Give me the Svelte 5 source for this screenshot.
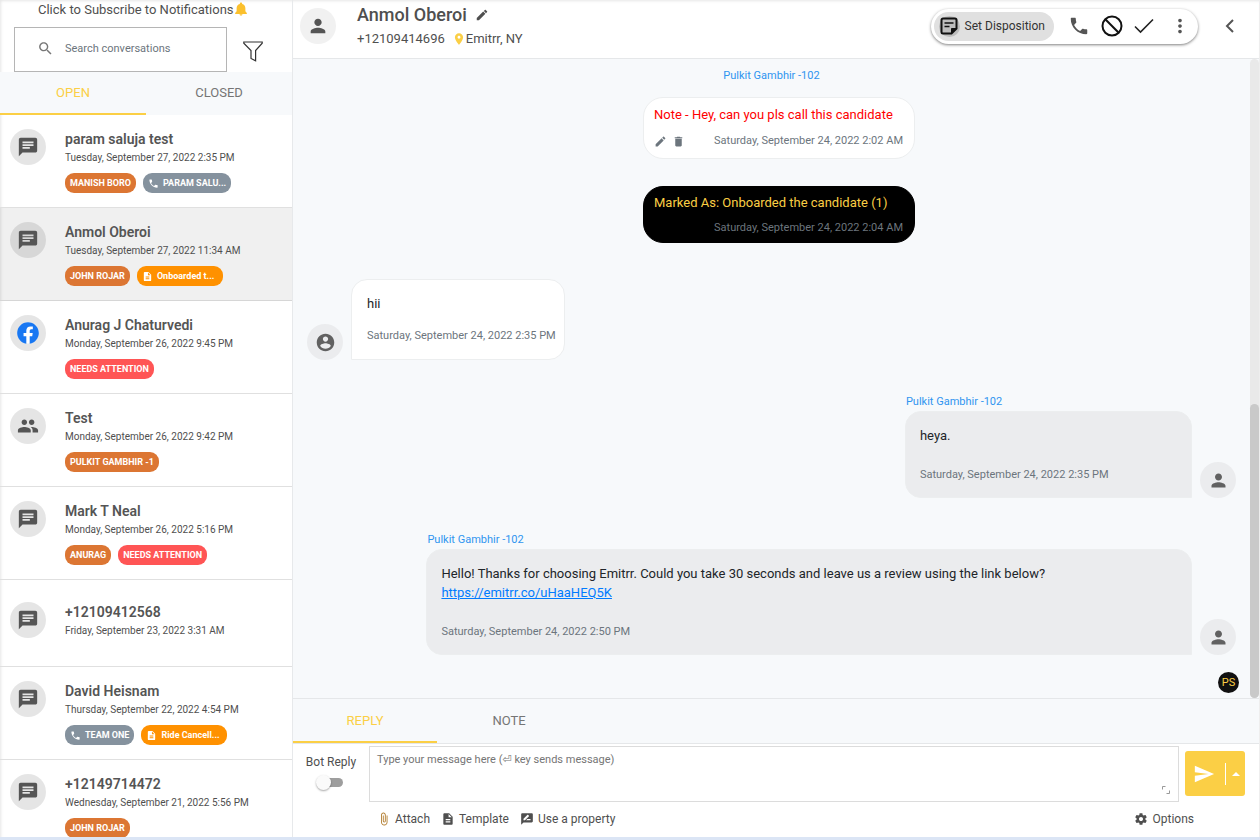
<script lang="ts">
  type Tag = { kind: "owner" | "line" | "status" | "alert"; text: string; icon?: string };
  type Conversation = { icon: string; name: string; date: string; tags: Tag[] };

  const icons: Record<string, string> = {
    chat: "M20 2H4c-1.1 0-1.99.9-1.99 2L2 22l4-4h14c1.1 0 2-.9 2-2V4c0-1.1-.9-2-2-2zM6 9h12v2H6V9zm8 5H6v-2h8v2zm4-6H6V6h12v2z",
    person: "M12 12c2.21 0 4-1.79 4-4s-1.79-4-4-4-4 1.79-4 4 1.79 4 4 4zm0 2c-2.67 0-8 1.34-8 4v2h16v-2c0-2.66-5.33-4-8-4z",
    group: "M16 11c1.66 0 2.99-1.34 2.99-3S17.66 5 16 5c-1.66 0-3 1.34-3 3s1.34 3 3 3zm-8 0c1.66 0 2.99-1.34 2.99-3S9.66 5 8 5C6.34 5 5 6.34 5 8s1.34 3 3 3zm0 2c-2.33 0-7 1.17-7 3.5V19h14v-2.5c0-2.33-4.67-3.5-7-3.5zm8 0c-.29 0-.62.02-.97.05 1.16.84 1.97 1.97 1.97 3.45V19h6v-2.5c0-2.33-4.67-3.5-7-3.5z",
    account: "M12 2C6.48 2 2 6.48 2 12s4.48 10 10 10 10-4.48 10-10S17.52 2 12 2zm0 3c1.66 0 3 1.34 3 3s-1.34 3-3 3-3-1.34-3-3 1.34-3 3-3zm0 14.2c-2.5 0-4.71-1.28-6-3.22.03-1.99 4-3.08 6-3.08 1.99 0 5.97 1.09 6 3.08-1.29 1.94-3.5 3.22-6 3.22z",
    edit: "M3 17.25V21h3.75L17.81 9.94l-3.75-3.75L3 17.25zM20.71 7.04c.39-.39.39-1.02 0-1.41l-2.34-2.34c-.39-.39-1.02-.39-1.41 0l-1.83 1.83 3.75 3.75 1.83-1.83z",
    trash: "M6 19c0 1.1.9 2 2 2h8c1.1 0 2-.9 2-2V7H6v12zM19 4h-3.5l-1-1h-5l-1 1H5v2h14V4z",
    place: "M12 2C8.13 2 5 5.13 5 9c0 5.25 7 13 7 13s7-7.75 7-13c0-3.87-3.13-7-7-7zm0 9.5c-1.38 0-2.5-1.12-2.5-2.5s1.12-2.5 2.5-2.5 2.5 1.12 2.5 2.5-1.12 2.5-2.5 2.5z",
    phone: "M6.62 10.79c1.44 2.83 3.76 5.14 6.59 6.59l2.2-2.2c.27-.27.67-.36 1.02-.24 1.12.37 2.33.57 3.57.57.55 0 1 .45 1 1V20c0 .55-.45 1-1 1-9.39 0-17-7.61-17-17 0-.55.45-1 1-1h3.5c.55 0 1 .45 1 1 0 1.25.2 2.45.57 3.57.11.35.03.74-.25 1.02l-2.2 2.2z",
    search: "M15.5 14h-.79l-.28-.27C15.41 12.59 16 11.11 16 9.5 16 5.91 13.09 3 9.5 3S3 5.91 3 9.5 5.91 16 9.5 16c1.61 0 3.09-.59 4.23-1.57l.27.28v.79l5 4.99L20.49 19l-4.99-5zm-6 0C7.01 14 5 11.99 5 9.5S7.01 5 9.5 5 14 7.01 14 9.5 11.99 14 9.5 14z",
    doc: "M14 2H6c-1.1 0-1.99.9-1.99 2L4 20c0 1.1.89 2 1.99 2H18c1.1 0 2-.9 2-2V8l-6-6zm2 16H8v-2h8v2zm0-4H8v-2h8v2zm-3-5V3.5L18.5 9H13z",
    more: "M12 8c1.1 0 2-.9 2-2s-.9-2-2-2-2 .9-2 2 .9 2 2 2zm0 2c-1.1 0-2 .9-2 2s.9 2 2 2 2-.9 2-2-.9-2-2-2zm0 6c-1.1 0-2 .9-2 2s.9 2 2 2 2-.9 2-2-.9-2-2-2z",
    bell: "M12 23c1.500 0 2.500-.9 2.500-2.200h-5C9.500 22.100 10.500 23 12 23zM19.500 16v-5.500c0-3.500-2-6.300-5.500-7V3c0-1.100-.9-2-2-2s-2 .9-2 2v.5c-3.500.7-5.500 3.500-5.500 7V16L2 19v1.500h20V19z",
    send: "M2.010 21L23 12 2.010 3 2 10l15 2-15 2z",
    clip: "M16.500 6v11.500c0 2.210-1.790 4-4 4s-4-1.790-4-4V5c0-1.380 1.120-2.500 2.500-2.500s2.500 1.120 2.500 2.500v10.500c0 .55-.45 1-1 1s-1-.45-1-1V6H10v9.500c0 1.380 1.120 2.500 2.500 2.500s2.500-1.120 2.500-2.500V5c0-2.210-1.790-4-4-4S7 2.790 7 5v12.500c0 3.040 2.460 5.500 5.500 5.500s5.500-2.460 5.500-5.500V6h-1.500z",
    review: "M20 2H4c-1.1 0-1.99.9-1.99 2L2 22l4-4h14c1.1 0 2-.9 2-2V4c0-1.1-.9-2-2-2zM6 14v-2.47l6.88-6.88c.2-.2.51-.2.71 0l1.77 1.77c.2.2.2.51 0 .71L8.47 14H6zm12 0h-7.5l2-2H18v2z",
    gear: "M19.43 12.98c.04-.32.07-.64.07-.98s-.03-.66-.07-.98l2.11-1.65c.19-.15.24-.42.12-.64l-2-3.46c-.12-.22-.39-.3-.61-.22l-2.49 1c-.52-.4-1.08-.73-1.69-.98l-.38-2.65C14.46 2.18 14.25 2 14 2h-4c-.25 0-.46.18-.49.42l-.38 2.65c-.61.25-1.17.59-1.69.98l-2.49-1c-.23-.09-.49 0-.61.22l-2 3.46c-.13.22-.07.49.12.64l2.11 1.65c-.04.32-.07.65-.07.98s.03.66.07.98l-2.11 1.65c-.19.15-.24.42-.12.64l2 3.46c.12.22.39.3.61.22l2.49-1c.52.4 1.08.73 1.69.98l.38 2.65c.03.24.24.42.49.42h4c.25 0 .46-.18.49-.42l.38-2.65c.61-.25 1.17-.59 1.69-.98l2.49 1c.23.09.49 0 .61-.22l2-3.46c.12-.22.07-.49-.12-.64l-2.11-1.65zM12 15.5c-1.93 0-3.5-1.57-3.5-3.5s1.57-3.5 3.5-3.5 3.5 1.57 3.5 3.5-1.57 3.5-3.5 3.5z",
    facebook: "M22 12c0-5.52-4.48-10-10-10S2 6.48 2 12c0 4.99 3.66 9.13 8.44 9.88v-6.99H7.9V12h2.54V9.8c0-2.510 1.490-3.890 3.780-3.890 1.090 0 2.240.19 2.240.19v2.460h-1.260c-1.240 0-1.630.77-1.630 1.560V12h2.780l-.45 2.890h-2.330v6.990C18.340 21.130 22 16.990 22 12z"
  };

  const conversations: Conversation[] = [
    { icon: "chat", name: "param saluja test", date: "Tuesday, September 27, 2022 2:35 PM", tags: [{ kind: "owner", text: "MANISH BORO" }, { kind: "line", text: "PARAM SALU...", icon: "phone" }] },
    { icon: "chat", name: "Anmol Oberoi", date: "Tuesday, September 27, 2022 11:34 AM", tags: [{ kind: "owner", text: "JOHN ROJAR" }, { kind: "status", text: "Onboarded t...", icon: "doc" }] },
    { icon: "facebook", name: "Anurag J Chaturvedi", date: "Monday, September 26, 2022 9:45 PM", tags: [{ kind: "alert", text: "NEEDS ATTENTION" }] },
    { icon: "group", name: "Test", date: "Monday, September 26, 2022 9:42 PM", tags: [{ kind: "owner", text: "PULKIT GAMBHIR -1" }] },
    { icon: "chat", name: "Mark T Neal", date: "Monday, September 26, 2022 5:16 PM", tags: [{ kind: "owner", text: "ANURAG" }, { kind: "alert", text: "NEEDS ATTENTION" }] },
    { icon: "chat", name: "+12109412568", date: "Friday, September 23, 2022 3:31 AM", tags: [] },
    { icon: "chat", name: "David Heisnam", date: "Thursday, September 22, 2022 4:54 PM", tags: [{ kind: "line", text: "TEAM ONE", icon: "phone" }, { kind: "status", text: "Ride Cancell...", icon: "doc" }] },
    { icon: "chat", name: "+12149714472", date: "Wednesday, September 21, 2022 5:56 PM", tags: [{ kind: "owner", text: "JOHN ROJAR" }] }
  ];

  let listTab = $state("OPEN");
  let replyTab = $state("REPLY");
  let current = $state(1);
  let query = $state("");
  let draft = $state("");
  let botReply = $state(false);
</script>

{#snippet icon(name: string, size: number)}
  <svg class="icon" width={size} height={size} viewBox="0 0 24 24" aria-hidden="true"><path d={icons[name]} /></svg>
{/snippet}

<div class="app">
  <div class="panes">
    <aside class="sidebar">
      <button class="subscribe">Click to Subscribe to Notifications<span class="bell">{@render icon("bell", 14)}</span></button>

      <div class="search-row">
        <label class="search">
          {@render icon("search", 17)}
          <input type="text" placeholder="Search conversations" aria-label="Search conversations" bind:value={query} />
        </label>
        <button class="filter" aria-label="Filter">
          <svg width="20" height="21" viewBox="0 0 20 21" fill="none" stroke="#333" stroke-width="1.2" aria-hidden="true">
            <path d="M.8 1h18.400v1.200L12.600 9.500v10.300L8 17.500v-8L.8 2.200z" />
          </svg>
        </button>
      </div>

      <div class="tabs list-tabs">
        {#each ["OPEN", "CLOSED"] as t}
          <button class:active={listTab === t} onclick={() => (listTab = t)}>{t}</button>
        {/each}
      </div>

      <div class="list">
        {#each conversations as c, idx}
          <button class="conv" class:selected={current === idx} class:plain={!c.tags.length} onclick={() => (current = idx)}>
            <span class="avatar {c.icon}">{@render icon(c.icon, c.icon === "facebook" ? 26 : 22)}</span>
            <span class="info">
              <span class="name">{c.name}</span>
              <span class="date">{c.date}</span>
              {#if c.tags.length}
                <span class="tags">
                  {#each c.tags as tag}
                    <span class="tag {tag.kind}">
                      {#if tag.icon}{@render icon(tag.icon, 11)}{/if}
                      <span>{tag.text}</span>
                    </span>
                  {/each}
                </span>
              {/if}
            </span>
          </button>
        {/each}
      </div>
    </aside>

    <main class="main">
      <header class="head">
        <span class="avatar light">{@render icon("person", 22)}</span>
        <div class="contact">
          <h1>Anmol Oberoi <button aria-label="Edit name">{@render icon("edit", 14)}</button></h1>
          <p><span>+12109414696</span><span class="pin">{@render icon("place", 14)}</span><span>Emitrr, NY</span></p>
        </div>
        <div class="toolbar">
          <button class="disposition">
            <span class="disp-icon">
              <svg width="18" height="18" viewBox="0 0 18 18" fill="none" stroke="#111" stroke-width="2" aria-hidden="true">
                <path d="M3 1.500h12a1.500 1.500 0 0 1 1.500 1.500v8.500l-5 5H3A1.500 1.500 0 0 1 1.500 15V3A1.500 1.500 0 0 1 3 1.500z" />
                <path d="M4.500 6h9M4.500 9.500h5" stroke-width="1.500" />
                <path d="M11.500 16.500v-5h5z" fill="#111" stroke-width="1" />
              </svg>
            </span>
            Set Disposition
          </button>
          <button class="tool" aria-label="Call">{@render icon("phone", 22)}</button>
          <button class="tool" aria-label="Block">
            <svg width="22" height="22" viewBox="0 0 22 22" fill="none" stroke="#111" stroke-width="2" aria-hidden="true">
              <circle cx="11" cy="11" r="9.500" /><path d="M4.300 4.300l13.400 13.400" />
            </svg>
          </button>
          <button class="tool check" aria-label="Close conversation">
            <svg width="20" height="16" viewBox="0 0 20 16" fill="none" stroke="#222" stroke-width="1.600" aria-hidden="true"><path d="M1 8.500l5.500 5.500L19 1.500" /></svg>
          </button>
          <button class="tool" aria-label="More">{@render icon("more", 22)}</button>
        </div>
        <button class="collapse" aria-label="Collapse">
          <svg width="10" height="14" viewBox="0 0 10 14" fill="none" stroke="#555" stroke-width="2" aria-hidden="true"><path d="M8 1L2 7l6 6" /></svg>
        </button>
      </header>

      <section class="thread">
        <div class="messages">
          <div class="system">
            <div class="author">Pulkit Gambhir -102</div>
            <article class="note">
              <p>Note - Hey, can you pls call this candidate</p>
              <footer>
                <button aria-label="Edit note">{@render icon("edit", 13)}</button>
                <button aria-label="Delete note">{@render icon("trash", 13)}</button>
                <time>Saturday, September 24, 2022 2:02 AM</time>
              </footer>
            </article>
            <article class="note marked">
              <p>Marked As: Onboarded the candidate (1)</p>
              <footer><time>Saturday, September 24, 2022 2:04 AM</time></footer>
            </article>
          </div>

          <div class="msg incoming">
            <span class="avatar soft">{@render icon("account", 21)}</span>
            <article class="bubble">
              <p>hii</p>
              <time>Saturday, September 24, 2022 2:35 PM</time>
            </article>
          </div>

          <div class="msg outgoing short">
            <div class="body">
              <div class="author">Pulkit Gambhir -102</div>
              <article class="bubble">
                <p>heya.</p>
                <time>Saturday, September 24, 2022 2:35 PM</time>
              </article>
            </div>
            <span class="avatar soft">{@render icon("person", 21)}</span>
          </div>

          <div class="msg outgoing">
            <div class="body">
              <div class="author">Pulkit Gambhir -102</div>
              <article class="bubble">
                <p>Hello! Thanks for choosing Emitrr. Could you take 30 seconds and leave us a review using the link below?<br /><a href="https://emitrr.co/uHaaHEQ5K">https://emitrr.co/uHaaHEQ5K</a></p>
                <time>Saturday, September 24, 2022 2:50 PM</time>
              </article>
            </div>
            <span class="avatar soft">{@render icon("person", 21)}</span>
          </div>

          <span class="viewer">PS</span>
        </div>
        <div class="scrollbar"><div class="thumb"></div></div>
      </section>

      <div class="tabs reply-tabs">
        {#each ["REPLY", "NOTE"] as t}
          <button class:active={replyTab === t} onclick={() => (replyTab = t)}>{t}</button>
        {/each}
      </div>

      <section class="composer">
        <label class="bot">
          Bot Reply
          <input type="checkbox" bind:checked={botReply} />
        </label>
        <div class="entry">
          <div class="field">
            <textarea placeholder="Type your message here (⏎ key sends message)" aria-label="Message" bind:value={draft}></textarea>
            <svg class="grow" width="8" height="8" viewBox="0 0 8 8" fill="none" stroke="#999" aria-hidden="true"><path d="M.5 3.500v-3h3M7.500 4.500v3h-3" /></svg>
          </div>
          <div class="actions">
            <button class="attach">{@render icon("clip", 14)}Attach</button>
            <button>{@render icon("doc", 14)}Template</button>
            <button>{@render icon("review", 14)}Use a property</button>
            <button class="options">{@render icon("gear", 14)}Options</button>
          </div>
        </div>
        <div class="send">
          <button class="go" aria-label="Send">{@render icon("send", 22)}</button>
          <button class="menu" aria-label="Send options"><span class="caret"></span></button>
        </div>
      </section>
    </main>
  </div>
  <div class="strip"></div>
</div>

<style>
  :global(body) { background: #fff; }
  .app {
    height: 100vh;
    display: flex;
    flex-direction: column;
    overflow: hidden;
    font-family: Roboto, "Liberation Sans", sans-serif;
    color: #4f4f4f;
  }
  .app *, .app *::before { box-sizing: border-box; }
  button {
    font: inherit;
    color: inherit;
    background: none;
    border: 0;
    padding: 0;
    cursor: pointer;
  }
  p, h1 { margin: 0; }
  .icon { display: block; flex: none; fill: currentColor; }
  .panes { flex: 1; min-height: 0; display: flex; }
  .strip { height: 3px; background: #dbe5f5; }

  /* sidebar */
  .sidebar {
    flex: 0 0 293px;
    display: flex;
    flex-direction: column;
    border-right: 1px solid #e7e9eb;
    overflow: hidden;
    box-shadow: inset 3px 3px 3px -2px rgba(0, 0, 0, .1);
  }
  .subscribe {
    display: flex;
    align-items: center;
    padding-left: 38px;
    height: 18px;
    font-size: 13px;
  }
  .bell { color: #fbc02d; }
  .search-row { display: flex; align-items: center; padding: 9px 29px 0 14px; }
  .search {
    flex: 1;
    min-width: 0;
    display: flex;
    align-items: center;
    gap: 11px;
    height: 45px;
    padding: 0 8px 3px 22px;
    border: 1px solid #b5b5b5;
    color: #777;
  }
  .search input {
    min-width: 0;
    flex: 1;
    border: 0;
    padding: 0;
    outline: none;
    background: none;
    font: 11px Roboto, sans-serif;
    color: #333;
  }
  .search input::placeholder { color: #6c757d; }
  .filter { margin-left: 16px; display: flex; padding-top: 3px; }

  .tabs { display: flex; background: #f7f9fb; }
  .tabs button {
    border-bottom: 2px solid transparent;
    color: #757575;
    font-size: 13px;
  }
  .tabs button.active { color: #fbcf45; border-color: #fbcf45; }
  .list-tabs button { flex: 1; height: 43px; }

  .list { flex: 1; min-height: 0; overflow: hidden; }
  .conv {
    width: 100%;
    display: flex;
    align-items: flex-start;
    gap: 19px;
    padding: 14px 10px;
    border-bottom: 1px solid #e0e0e0;
    text-align: left;
  }
  .conv.plain { padding: 22px 10px 14px; }
  .conv.selected { background: rgba(0, 0, 0, .06); border-color: #d6d6d6; }
  .avatar {
    flex: none;
    width: 36px;
    height: 36px;
    border-radius: 50%;
    display: flex;
    align-items: center;
    justify-content: center;
    background: rgba(0, 0, 0, .1);
    color: #555;
  }
  .avatar.light { background: #f1f1f1; }
  .avatar.soft { background: #ebecee; color: #616161; }
  .avatar.facebook { color: #1877f2; background: radial-gradient(#fff 10px, #e5e5e5 11px); }
  .info { display: flex; flex-direction: column; min-width: 0; min-height: 50px; }
  .name { font-size: 14px; font-weight: 600; line-height: 21px; color: #555; }
  .date { font-size: 10px; line-height: 16px; }
  .tags { display: flex; gap: 7px; margin-top: 7px; }
  .tag {
    display: flex;
    align-items: center;
    gap: 4px;
    height: 20px;
    padding: 0 5px;
    border-radius: 9px;
    white-space: nowrap;
    font-size: 9px;
    font-weight: 700;
    color: #fff;
  }
  .owner { background: #dc7633; }
  .line { background: #85929e; }
  .status { background: #ff9100; min-width: 86px; }
  .alert { background: #ff5555; }

  /* conversation header */
  .main { flex: 1; min-width: 0; display: flex; flex-direction: column; border-right: 1px solid #eee; }
  .head {
    display: flex;
    align-items: center;
    height: 59px;
    padding: 0 24px 6px 7px;
    border-bottom: 1px solid #e5e7e9;
    box-shadow: inset 0 3px 3px -2px rgba(0, 0, 0, .1);
  }
  .contact { flex: 1; margin-left: 21px; padding-top: 2px; }
  .contact h1 {
    display: flex;
    align-items: center;
    gap: 8px;
    font-size: 18px;
    font-weight: 500;
    line-height: 24px;
  }
  .contact p { display: flex; align-items: center; font-size: 13px; line-height: 24px; }
  .pin { color: #fbcf45; margin-left: 7px; }
  .toolbar {
    display: flex;
    align-items: center;
    height: 35px;
    padding: 0 7px 0 3px;
    border-radius: 18px;
    box-shadow: 0 1px 3px rgba(0, 0, 0, .5);
    color: #555;
  }
  .disposition {
    display: flex;
    align-items: center;
    gap: 5px;
    height: 29px;
    padding: 0 9px 0 5px;
    margin-right: 14px;
    border-radius: 15px;
    background: #e0e0e0;
    font-size: 12px;
    color: #333;
  }
  .disp-icon {
    display: flex;
    align-items: center;
    justify-content: center;
    width: 21px;
    height: 21px;
    border-radius: 50%;
    background: #bdbdbd;
  }
  .tool { display: flex; margin-right: 11px; }
  .tool.check { margin-right: 15px; }
  .tool:last-child { margin: 0; }
  .collapse { display: flex; margin-left: 27px; }

  /* thread */
  .thread { flex: 1; min-height: 0; display: flex; background: #f7f9fb; }
  .messages { flex: 1; min-width: 0; overflow: hidden; display: flex; flex-direction: column; }
  .scrollbar { width: 9px; display: flex; align-items: flex-end; background: #e9e9e9; border-radius: 5px; }
  .thumb { width: 100%; height: 46%; background: #c9c9c9; border-radius: 5px; }
  .author { font-size: 11px; line-height: 16px; color: #2f95f0; }
  time { font-size: 11px; line-height: 16px; color: #6c757d; }
  .messages p { font-size: 13px; line-height: 19px; color: #212529; }
  .messages p a { color: #007bff; }

  .system { display: flex; flex-direction: column; align-items: center; padding-top: 9px; }
  .note {
    width: 272px;
    margin: 13px 0 0 15px;
    padding: 7px 11px 9px 10px;
    border: 1px solid #eceeef;
    border-radius: 20px;
    background: #fff;
  }
  .messages .note p { color: #f00; }
  .note footer { display: flex; align-items: center; gap: 5px; margin-top: 9px; color: #6c757d; }
  .note time { margin-left: auto; }
  .note.marked { margin-top: 27px; background: #000; border-color: #000; padding: 6px 11px 6px 10px; }
  .messages .note.marked p { color: #fbcf45; }
  .note.marked footer { margin-top: 8px; }

  .msg { display: flex; align-items: flex-end; gap: 8px; }
  .bubble { display: flex; flex-direction: column; border-radius: 16px; border: 1px solid #eceeef; }
  .incoming { padding-left: 14px; margin-top: 36px; }
  .incoming .bubble {
    background: #fff;
    border-bottom-left-radius: 0;
    padding: 14px 8px 15px 15px;
  }
  .incoming time { margin-top: 15px; }
  .outgoing { justify-content: flex-end; margin-top: 34px; }
  .outgoing .avatar { margin-right: 14px; }
  .outgoing .body { width: 80%; }
  .outgoing.short .body { width: 30%; }
  .outgoing .author { padding-left: 1px; margin-bottom: 1px; }
  .outgoing .bubble { background: #ebecee; border-bottom-right-radius: 0; padding: 14px; }
  .outgoing time { margin-top: 22px; }
  .viewer {
    align-self: flex-end;
    flex: none;
    margin: 17px 11px 0 0;
    width: 21px;
    height: 21px;
    line-height: 21px;
    border-radius: 50%;
    background: #111;
    color: #fbcf45;
    font-size: 11px;
    text-align: center;
  }

  /* composer */
  .reply-tabs { border-top: 1px solid #e5e7e9; border-bottom: 1px solid #e5e7e9; }
  .reply-tabs button { width: 144px; height: 44px; }
  .composer { display: flex; align-items: flex-start; padding: 2px 14px 1px 0; }
  .bot {
    width: 76px;
    display: flex;
    flex-direction: column;
    align-items: center;
    gap: 8px;
    padding-top: 8px;
    font-size: 12px;
    line-height: 16px;
  }
  .bot input {
    appearance: none;
    position: relative;
    width: 24px;
    height: 9px;
    margin: 0;
    border-radius: 5px;
    background: #9e9e9e;
  }
  .bot input::before {
    content: "";
    position: absolute;
    left: -3px;
    top: -3px;
    width: 15px;
    height: 15px;
    border-radius: 50%;
    background: #fafafa;
    box-shadow: 0 1px 2px rgba(0, 0, 0, .35);
  }
  .bot input:checked::before { left: 12px; }
  .entry { flex: 1; min-width: 0; }
  .field { position: relative; display: flex; }
  textarea {
    flex: 1;
    height: 56px;
    padding: 5px 7px;
    border: 1px solid #dcdcdc;
    outline: none;
    resize: none;
    font: 11px/16px Roboto, "DejaVu Sans", sans-serif;
    color: #333;
  }
  textarea::placeholder { color: #757575; }
  .grow { position: absolute; right: 9px; bottom: 8px; }
  .actions { display: flex; gap: 11px; height: 34px; padding-left: 8px; font-size: 12px; }
  .actions button { display: flex; align-items: center; gap: 4px; }
  .attach .icon { fill: #b07a2a; }
  .actions .options { margin-left: auto; margin-right: -15px; }
  .send {
    display: flex;
    align-items: center;
    height: 45px;
    margin: 5px 0 0 6px;
    border-radius: 3px;
    background: #fbcf45;
    color: #fff;
  }
  .go { display: flex; width: 40px; padding-left: 8px; }
  .menu { width: 20px; height: 22px; border-left: 1px solid #fff; display: flex; align-items: center; justify-content: center; }
  .caret { border: 4px solid transparent; border-top: 0; border-bottom-color: #fff; }
</style>
